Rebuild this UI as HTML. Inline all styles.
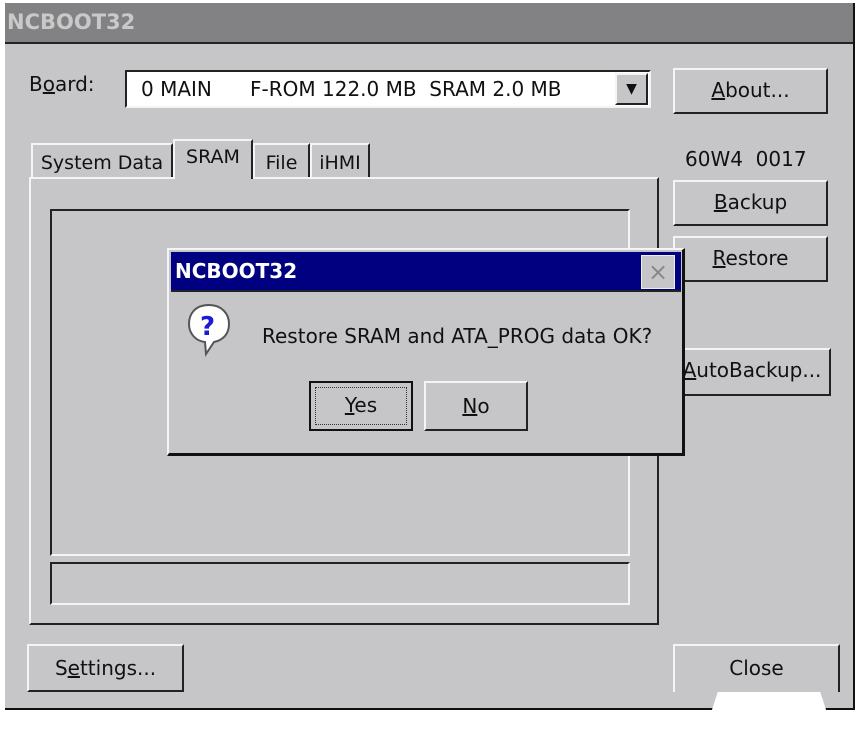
<!DOCTYPE html>
<html><head><style>
body{margin:0;width:860px;height:735px;background:#fff;position:relative;overflow:hidden;font-family:"DejaVu Sans","Liberation Sans",sans-serif;font-size:20px;color:#111}
div{box-sizing:border-box;position:absolute}
.win{left:5px;top:3px;width:850px;height:707px;background:#c6c5c8;border-right:2px solid #111;border-bottom:2px solid #111}
.tb{left:0;top:0;width:848px;height:41px;background:#828183;border-bottom:2px solid #222;color:#c9c9c9;font-weight:bold;font-size:21px;padding:7px 0 0 2px}
.btn{background:#c6c5c8;border-top:2px solid #f4f4f4;border-left:2px solid #f4f4f4;border-right:2px solid #222;border-bottom:2px solid #222;text-align:center;line-height:40px;white-space:nowrap}
.sunk{border-top:2px solid #222;border-left:2px solid #222;border-right:2px solid #f4f4f4;border-bottom:2px solid #f4f4f4}
.tab{top:0;height:38px;border-top:2px solid #f4f4f4;border-left:2px solid #f4f4f4;border-right:2px solid #222;padding:7px 0 0 0;text-align:center;background:#c6c5c8;white-space:nowrap}
u{text-decoration:underline}
</style></head><body>
<div class="win">
 <div class="tb">NCBOOT32</div>
 <div style="left:24px;top:69px">B<u>o</u>ard:</div>
 <div class="sunk" style="left:120px;top:67px;width:526px;height:38px;background:#fff;padding:5px 0 0 14px;white-space:pre">0 MAIN      F-ROM 122.0 MB  SRAM 2.0 MB</div>
 <div class="btn" style="left:610px;top:70px;width:33px;height:32px;line-height:28px;font-size:14px">▼</div>
 <div class="btn" style="left:668px;top:65px;width:155px;height:46px"><u>A</u>bout...</div>
 <div style="left:680px;top:144px">60W4&nbsp; 0017</div>
 <div class="btn" style="left:668px;top:177px;width:155px;height:46px"><u>B</u>ackup</div>
 <div class="btn" style="left:668px;top:233px;width:155px;height:46px"><u>R</u>estore</div>
 <div class="btn" style="left:668px;top:345px;width:158px;height:48px"><u>A</u>utoBackup...</div>
 <div style="left:24px;top:136px;width:350px;height:40px">
  <div class="tab" style="left:2px;top:4px;width:142px;height:36px;font-size:19px">System Data</div>
  <div class="tab" style="left:144px;top:0;width:80px;height:40px;z-index:2;padding-top:5px;font-size:19px">SRAM</div>
  <div class="tab" style="left:224px;top:4px;width:57px;height:36px;font-size:19px">File</div>
  <div class="tab" style="left:281px;top:4px;width:60px;height:36px;font-size:19px">iHMI</div>
 </div>
 <div style="left:24px;top:174px;width:630px;height:448px;border-top:2px solid #f4f4f4;border-left:2px solid #f4f4f4;border-right:2px solid #222;border-bottom:2px solid #222"></div>
 <div class="sunk" style="left:45px;top:206px;width:580px;height:347px"></div>
 <div class="sunk" style="left:45px;top:559px;width:580px;height:43px"></div>
 <div class="btn" style="left:22px;top:641px;width:157px;height:48px;line-height:44px">S<u>e</u>ttings...</div>
 <div class="btn" style="left:668px;top:641px;width:167px;height:48px;line-height:44px;border-bottom:none">Close</div>
</div>
<div style="left:708px;top:692px;width:122px;height:30px;background:#fff;clip-path:polygon(8% 0,92% 0,100% 100%,0 100%)"></div>
<div style="left:167px;top:248px;width:518px;height:208px;background:#c6c5c8;border-top:2px solid #f4f4f4;border-left:2px solid #f4f4f4;border-right:3px solid #111;border-bottom:3px solid #111">
 <div style="left:2px;top:2px;width:510px;height:40px;background:#000080;border-bottom:2px solid #222;color:#fff;font-weight:bold;padding:7px 0 0 4px">NCBOOT32</div>
 <div style="left:472px;top:5px;width:34px;height:34px;background:#c6c5c8;border:1px solid #eee;color:#888;text-align:center;line-height:32px;font-size:24px">×</div>
 <svg style="position:absolute;left:18px;top:53px" width="60" height="70" viewBox="0 0 60 70"><path d="M22 2C8 2 2 11 2 21c0 10 7 17 16 18l1 12 8-12c10-2 15-9 15-18C42 10 34 2 22 2z" fill="#fff" stroke="#555" stroke-width="2"/><text x="13" y="32" font-family="DejaVu Sans" font-weight="bold" font-size="26" fill="#1a1ad8">?</text></svg>
 <div style="left:93px;top:74px;white-space:nowrap">Restore SRAM and ATA_PROG data OK?</div>
 <div class="btn" style="left:140px;top:131px;width:104px;height:50px;border:2px solid #111;line-height:44px"><div style="left:4px;top:4px;right:4px;bottom:4px;border:1px dotted #333"></div><u>Y</u>es</div>
 <div class="btn" style="left:255px;top:131px;width:104px;height:50px;line-height:46px"><u>N</u>o</div>
</div>
</body></html>
